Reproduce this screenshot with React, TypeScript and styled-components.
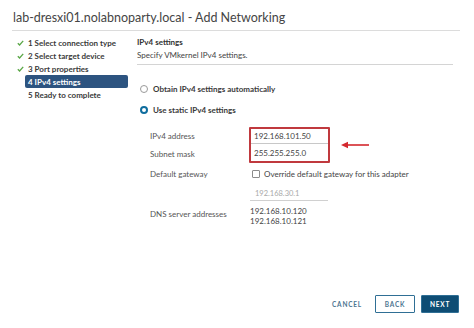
import React from 'react';
import styled, { createGlobalStyle } from 'styled-components';

const GlobalStyle = createGlobalStyle`
  html, body {
    margin: 0;
    padding: 0;
    background: #ffffff;
  }
  body {
    font-family: Lato, "Open Sans", "Liberation Sans", sans-serif;
    color: #333;
  }
  * {
    box-sizing: border-box;
  }
`;

const Page = styled.div`
  width: 474px;
  height: 328px;
  padding: 8px 15px 15px 12px;
  display: flex;
  flex-direction: column;
  background: #fff;
`;

const Title = styled.div`
  font-size: 12.5px;
  line-height: 20px;
  color: #454545;
  padding-left: 1px;
  padding-bottom: 2px;
  border-bottom: 1px solid #dcdcdc;
  width: 448px;
`;

const Body = styled.div`
  display: grid;
  grid-template-columns: 125px 316px;
  padding-top: 5px;
`;

const StepList = styled.div`
  display: flex;
  flex-direction: column;
`;

const Step = styled.div<{ $active?: boolean }>`
  height: 13px;
  display: flex;
  align-items: center;
  font-size: 8px;
  font-weight: 700;
  color: ${p => (p.$active ? '#ffffff' : '#3a3a3a')};
  background: ${p => (p.$active ? '#2d5480' : 'transparent')};
  border-radius: ${p => (p.$active ? '2px' : '0')};
  margin-left: ${p => (p.$active ? '13px' : '0')};
  width: ${p => (p.$active ? '103px' : 'auto')};
  padding-left: ${p => (p.$active ? '3px' : '5px')};
`;

const IconSlot = styled.span`
  width: 11px;
  display: inline-flex;
  align-items: center;
`;

const Panel = styled.div`
  display: flex;
  flex-direction: column;
`;

const PanelHeader = styled.div`
  padding-bottom: 2px;
  border-bottom: 1px solid #d4d4d4;
`;

const HeaderTitle = styled.div`
  font-size: 8px;
  line-height: 13px;
  font-weight: 700;
  color: #333;
`;

const HeaderText = styled.div`
  font-size: 8px;
  line-height: 13px;
  color: #444;
`;

const RadioGroup = styled.div`
  display: flex;
  flex-direction: column;
  gap: 8px;
  margin-top: 17px;
  padding-left: 3px;
`;

const RadioRow = styled.div`
  display: flex;
  align-items: center;
  gap: 5px;
  height: 13px;
  font-size: 8px;
  font-weight: 700;
  color: #3a3a3a;
`;

const Radio = styled.span<{ $checked?: boolean }>`
  width: 8px;
  height: 8px;
  border-radius: 50%;
  border: ${p => (p.$checked ? '2.5px solid #0f6d9e' : '1px solid #9a9a9a')};
  background: #fff;
`;

const FormGrid = styled.div`
  display: grid;
  grid-template-columns: 100px 80px 1fr;
  margin-top: 11px;
  padding-left: 13px;
`;

const Label = styled.div<{ $h?: number }>`
  grid-column: 1;
  font-size: 8px;
  color: #555;
  height: ${p => p.$h ?? 17}px;
  display: flex;
  align-items: center;
`;

const HighlightBox = styled.div`
  grid-column: 2;
  grid-row: 1 / span 2;
  border: 2px solid #c0393e;
  border-radius: 1px;
  margin-left: -1px;
  display: flex;
  flex-direction: column;
`;

const InputLine = styled.div<{ $last?: boolean }>`
  height: ${p => (p.$last ? 17 : 15)}px;
  display: flex;
  align-items: center;
  padding-left: 3px;
  font-size: 8px;
  color: #444;
  border-bottom: ${p => (p.$last ? 'none' : '1px solid #c8c8c8')};
`;

const ArrowCell = styled.div`
  grid-column: 3;
  grid-row: 1 / span 2;
  display: flex;
  align-items: center;
  padding-left: 11px;
`;

const Value = styled.div<{ $h?: number }>`
  grid-column: 2 / span 2;
  height: ${p => p.$h ?? 17}px;
  display: flex;
  align-items: center;
  font-size: 8px;
  color: #444;
`;

const CheckBox = styled.span`
  width: 8px;
  height: 8px;
  border: 1px solid #8c8c8c;
  border-radius: 1px;
  margin-left: 2px;
  margin-right: 4px;
`;

const GatewayInput = styled.div`
  width: 78px;
  height: 14px;
  display: flex;
  align-items: center;
  padding-left: 5px;
  border-bottom: 1px solid #d0d0d0;
  font-size: 7.5px;
  color: #a8a8a8;
`;

const DnsList = styled.div`
  grid-column: 2 / span 2;
  font-size: 8px;
  line-height: 10px;
  color: #444;
  padding-top: 3px;
`;

const Footer = styled.div`
  margin-top: auto;
  display: flex;
  justify-content: flex-end;
  align-items: center;
  gap: 6px;
`;

const Button = styled.button<{ $variant: 'flat' | 'outline' | 'solid' }>`
  height: 18px;
  font-family: Lato, "Open Sans", "Liberation Sans", sans-serif;
  font-size: 6.5px;
  font-weight: 700;
  letter-spacing: 0.8px;
  padding: 0;
  border-radius: 1px;
  cursor: pointer;
  width: ${p => (p.$variant === 'flat' ? '44px' : p.$variant === 'outline' ? '40px' : '38px')};
  color: ${p => (p.$variant === 'solid' ? '#ffffff' : '#4d7691')};
  background: ${p => (p.$variant === 'solid' ? '#0e4d74' : '#ffffff')};
  border: ${p =>
    p.$variant === 'flat' ? '1px solid transparent' : '1px solid #2f6f95'};
`;

const Check = () => (
  <svg width="7" height="6" viewBox="0 0 7 6">
    <polyline points="0.8,3.2 2.6,5 6.2,0.9" fill="none" stroke="#5aa746" strokeWidth="1.3" />
  </svg>
);

const Arrow = () => (
  <svg width="28" height="8" viewBox="0 0 28 8">
    <line x1="6" y1="4" x2="28" y2="4" stroke="#d4282e" strokeWidth="1.6" />
    <polygon points="0,4 7,0.8 7,7.2" fill="#d4282e" />
  </svg>
);

const steps = [
  { label: '1 Select connection type', done: true },
  { label: '2 Select target device', done: true },
  { label: '3 Port properties', done: true },
  { label: '4 IPv4 settings', active: true },
  { label: '5 Ready to complete' },
];

export default function App() {
  return (
    <>
      <GlobalStyle />
      <Page>
        <Title>lab-dresxi01.nolabnoparty.local - Add Networking</Title>
        <Body>
          <StepList>
            {steps.map(s =>
              s.active ? (
                <Step key={s.label} $active>{s.label}</Step>
              ) : (
                <Step key={s.label}>
                  <IconSlot>{s.done && <Check />}</IconSlot>
                  {s.label}
                </Step>
              )
            )}
          </StepList>
          <Panel>
            <PanelHeader>
              <HeaderTitle>IPv4 settings</HeaderTitle>
              <HeaderText>Specify VMkernel IPv4 settings.</HeaderText>
            </PanelHeader>
            <RadioGroup>
              <RadioRow>
                <Radio />
                Obtain IPv4 settings automatically
              </RadioRow>
              <RadioRow>
                <Radio $checked />
                Use static IPv4 settings
              </RadioRow>
            </RadioGroup>
            <FormGrid>
              <Label>IPv4 address</Label>
              <Label $h={18}>Subnet mask</Label>
              <HighlightBox>
                <InputLine>192.168.101.50</InputLine>
                <InputLine $last>255.255.255.0</InputLine>
              </HighlightBox>
              <ArrowCell>
                <Arrow />
              </ArrowCell>
              <Label $h={22}>Default gateway</Label>
              <Value $h={22}>
                <CheckBox />
                Override default gateway for this adapter
              </Value>
              <Label $h={18} />
              <Value $h={18}>
                <GatewayInput>192.168.30.1</GatewayInput>
              </Value>
              <Label $h={22}>DNS server addresses</Label>
              <DnsList>
                192.168.10.120
                <br />
                192.168.10.121
              </DnsList>
            </FormGrid>
          </Panel>
        </Body>
        <Footer>
          <Button $variant="flat">CANCEL</Button>
          <Button $variant="outline">BACK</Button>
          <Button $variant="solid">NEXT</Button>
        </Footer>
      </Page>
    </>
  );
}
